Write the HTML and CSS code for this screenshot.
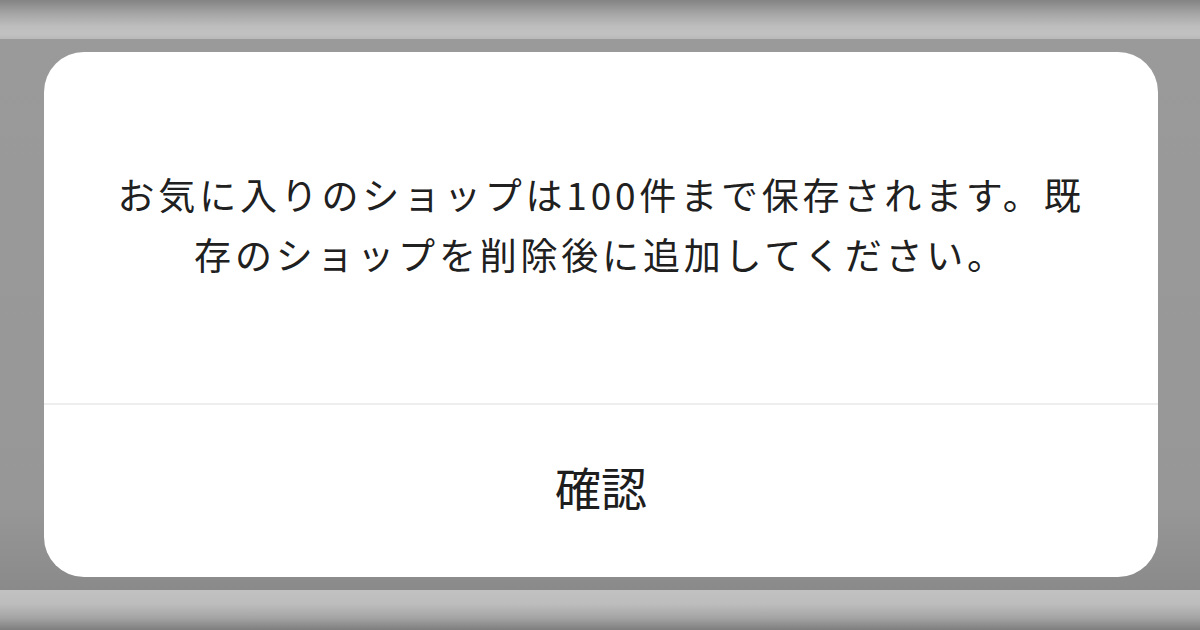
FILE: index.html
```html
<!DOCTYPE html>
<html lang="ja">
<head>
<meta charset="utf-8">
<link rel="stylesheet" href="styles.css">
</head>
<body>
<div class="screen">
  <div class="band band-top"></div>
  <div class="middle">
    <div class="dialog">
      <div class="message">
        <p class="msg-text">お気に入りのショップは100件まで保存されます。既<br>存のショップを削除後に追加してください。</p>
      </div>
      <div class="divider"></div>
      <div class="actions">
        <span class="confirm">確認</span>
      </div>
    </div>
  </div>
  <div class="band band-bottom"></div>
</div>
</body>
</html>
```
FILE: styles.css
```css
html, body {
  margin: 0;
  padding: 0;
}
body {
  width: 1200px;
  height: 630px;
  overflow: hidden;
  font-family: "Noto Sans CJK JP", "Noto Sans", sans-serif;
}
.screen {
  width: 1200px;
  height: 630px;
  display: flex;
  flex-direction: column;
  background: linear-gradient(to right, #8c8c8c 0px, #979797 30px, #979797 1170px, #8c8c8c 1200px);
}
.band {
  flex: none;
}
.band-top {
  height: 39px;
  background: linear-gradient(to bottom, #838383 0px, #a6a6a6 14px, #bdbdbd 26px, #c1c1c1 34px, #b9b9b9 39px);
}
.band-bottom {
  height: 40px;
  background: linear-gradient(to bottom, #c1c1c1 0px, #bdbdbd 14px, #a4a4a4 28px, #7e7e7e 40px);
}
.middle {
  flex: 1;
  display: flex;
  padding: 13px 42px 13px 44px;
  background: linear-gradient(to bottom, #9a9a9a 0%, #979797 85%, #8a8a8a 100%);
}
.dialog {
  flex: 1;
  display: flex;
  flex-direction: column;
  background: #ffffff;
  border-radius: 40px;
  overflow: hidden;
}
.message {
  height: 351px;
  display: flex;
  align-items: center;
  justify-content: center;
  padding-bottom: 8px;
  box-sizing: border-box;
}
.msg-text {
  margin: 0;
  text-align: center;
  font-size: 37px;
  line-height: 60px;
  letter-spacing: 3.8px;
  color: #202020;
}
.divider {
  height: 2px;
  background: #eeeeee;
}
.actions {
  flex: 1;
  display: flex;
  align-items: center;
  justify-content: center;
  padding-bottom: 10px;
}
.confirm {
  font-size: 46px;
  color: #1e1e1e;
}
```
